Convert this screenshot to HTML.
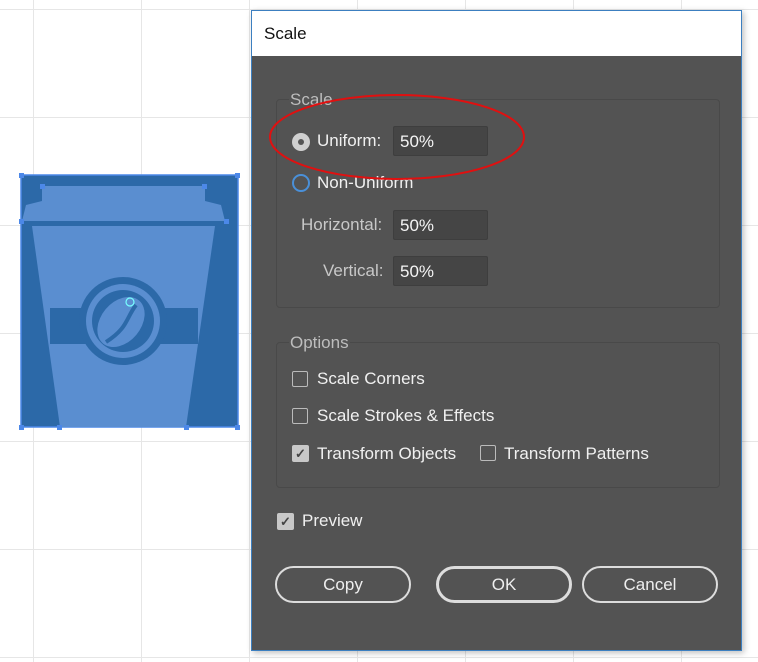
<!DOCTYPE html>
<html><head><style>
body{margin:0;width:758px;height:662px;overflow:hidden;position:relative;font-family:"Liberation Sans",sans-serif;
background-color:#fff;
background-image:linear-gradient(to right,#e6e6e6 1px,transparent 1px),linear-gradient(to bottom,#e6e6e6 1px,transparent 1px);
background-size:108px 108px;background-position:33px 9px;}
.a{position:absolute}
.dlg{left:251px;top:10px;width:489px;height:639px;background:#535353;border:1px solid #3c7fc0;box-shadow:2px 2px 6px rgba(0,0,0,.25)}
.title{left:0;top:0;width:489px;height:45px;background:#fff;color:#111;font-size:17px;line-height:45px;padding-left:12px;box-sizing:border-box}
.box{border:1px solid #494949;border-radius:4px}
.t{color:#f0f0f0;font-size:17px;white-space:nowrap}
.lg{color:#bdbdbd;font-size:17px;background:#535353;padding:0 1px}
.in{background:#454545;border:1px solid #3e3e3e;border-radius:2px;width:95px;height:30px;color:#f5f5f5;font-size:17px;line-height:30px;padding-left:6px;box-sizing:border-box}
.cb{width:16px;height:16px;border:1px solid #bbb;border-radius:2px;box-sizing:border-box}
.cbc{width:17px;height:17px;background:#c8c8c8;border-radius:2px;color:#444;font-size:13px;text-align:center;line-height:17px;font-weight:bold}
.btn{width:136px;height:37px;border:2px solid #ddd;border-radius:19px;box-sizing:border-box;color:#eee;font-size:17px;text-align:center;line-height:33px}
</style></head><body>
<svg class="a" style="left:0;top:0" width="250" height="440">
<rect x="21" y="175" width="217" height="252" fill="#2c69a8" stroke="#4c88e8" stroke-width="1.5"/>
<path d="M42 186 L205 186 L205 201 L221 205 L225 221 L22 221 L26 205 L42 201 Z" fill="#5a8ed0"/>
<path d="M32 226 L215 226 L186 427 L60 427 Z" fill="#5a8ed0"/>
<rect x="50" y="308" width="148" height="36" fill="#2c69a8"/>
<circle cx="123" cy="321" r="44" fill="#2c69a8"/>
<circle cx="123" cy="321" r="37" fill="#5a8ed0"/>
<circle cx="123" cy="321" r="31" fill="#2c69a8"/>
<ellipse cx="121" cy="322" rx="20" ry="28" transform="rotate(40 121 322)" fill="#5a8ed0"/>
<path d="M136 305 C126 318 128 328 106 342" stroke="#2c69a8" stroke-width="4" fill="none"/>
<g fill="#4c88e8"><rect x="19" y="173" width="5" height="5"/><rect x="235" y="173" width="5" height="5"/><rect x="19" y="425" width="5" height="5"/><rect x="235" y="425" width="5" height="5"/><rect x="57" y="425" width="5" height="5"/><rect x="184" y="425" width="5" height="5"/><rect x="40" y="184" width="5" height="5"/><rect x="202" y="184" width="5" height="5"/><rect x="19" y="219" width="5" height="5"/><rect x="224" y="219" width="5" height="5"/></g>
<circle cx="130" cy="302" r="4" fill="none" stroke="#7ff" stroke-width="1.2"/>
</svg>
<div class="a dlg">
<div class="a title">Scale</div>
<div class="a box" style="left:24px;top:88px;width:442px;height:207px"></div>
<div class="a lg" style="left:37px;top:79px">Scale</div>
<div class="a" style="left:40px;top:122px;width:18px;height:18px;border-radius:50%;background:#d0d0d0"><div class="a" style="left:6px;top:6px;width:6px;height:6px;border-radius:50%;background:#555"></div></div>
<div class="a t" style="left:65px;top:120px">Uniform:</div>
<div class="a in" style="left:141px;top:115px">50%</div>
<div class="a" style="left:40px;top:163px;width:18px;height:18px;border-radius:50%;border:2px solid #4a90d9;box-sizing:border-box"></div>
<div class="a t" style="left:65px;top:162px">Non-Uniform</div>
<div class="a t" style="left:49px;top:204px;color:#c8c8c8">Horizontal:</div>
<div class="a in" style="left:141px;top:199px">50%</div>
<div class="a t" style="left:71px;top:250px;color:#c8c8c8">Vertical:</div>
<div class="a in" style="left:141px;top:245px">50%</div>
<div class="a box" style="left:24px;top:331px;width:442px;height:144px"></div>
<div class="a lg" style="left:37px;top:322px">Options</div>
<div class="a cb" style="left:40px;top:360px"></div>
<div class="a t" style="left:65px;top:358px">Scale Corners</div>
<div class="a cb" style="left:40px;top:397px"></div>
<div class="a t" style="left:65px;top:395px">Scale Strokes &amp; Effects</div>
<div class="a cbc" style="left:40px;top:434px">✓</div>
<div class="a t" style="left:65px;top:433px">Transform Objects</div>
<div class="a cb" style="left:228px;top:434px"></div>
<div class="a t" style="left:252px;top:433px">Transform Patterns</div>
<div class="a cbc" style="left:25px;top:502px">✓</div>
<div class="a t" style="left:50px;top:500px">Preview</div>
<div class="a btn" style="left:23px;top:555px">Copy</div>
<div class="a btn" style="left:184px;top:555px;border-width:3px;line-height:31px">OK</div>
<div class="a btn" style="left:330px;top:555px">Cancel</div>
</div>
<svg class="a" style="left:0;top:0" width="758" height="662"><ellipse cx="397" cy="137" rx="127" ry="42" fill="none" stroke="#e01010" stroke-width="2"/></svg>
</body></html>
